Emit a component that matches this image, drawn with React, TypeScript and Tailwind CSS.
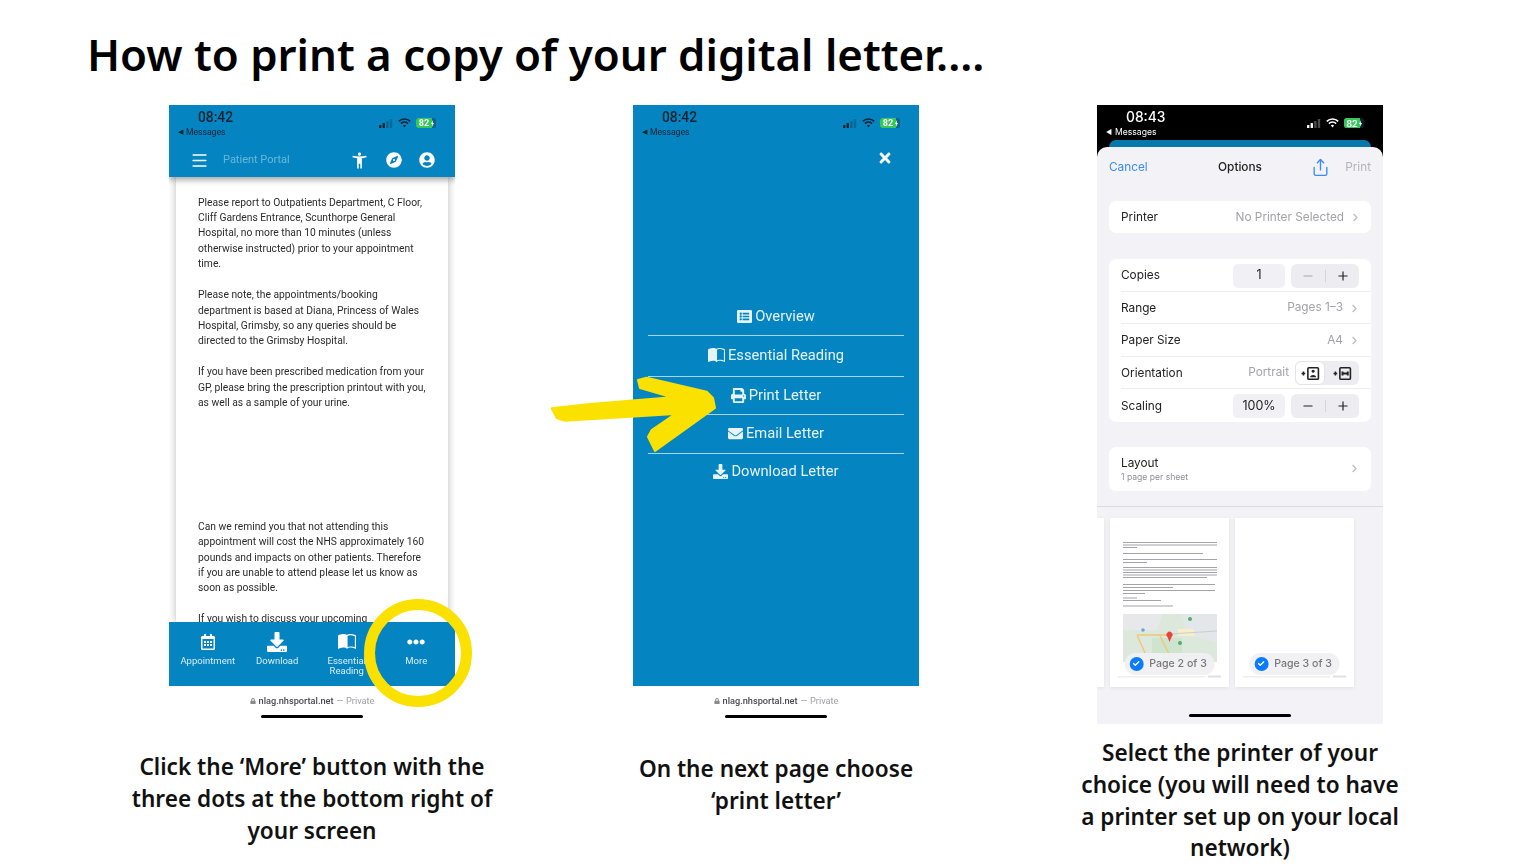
import type { ReactNode } from 'react'
import { BsBookHalf } from 'react-icons/bs'
import {
  FaCheck,
  FaChevronRight,
  FaCompass,
  FaDownload,
  FaEllipsisH,
  FaEnvelope,
  FaListAlt,
  FaLock,
  FaPrint,
  FaRegCalendarAlt,
  FaTimes,
  FaUserCircle,
} from 'react-icons/fa'
import { MdAccessibilityNew } from 'react-icons/md'
import { Menu, Minus, Plus, Share } from 'lucide-react'

const letter = [
  'Please report to Outpatients Department, C Floor,',
  'Cliff Gardens Entrance, Scunthorpe General',
  'Hospital, no more than 10 minutes (unless',
  'otherwise instructed) prior to your appointment',
  'time.',
  '',
  'Please note, the appointments/booking',
  'department is based at Diana, Princess of Wales',
  'Hospital, Grimsby, so any queries should be',
  'directed to the Grimsby Hospital.',
  '',
  'If you have been prescribed medication from your',
  'GP, please bring the prescription printout with you,',
  'as well as a sample of your urine.',
  '',
  '',
  '',
  '',
  '',
  '',
  '',
  'Can we remind you that not attending this',
  'appointment will cost the NHS approximately 160',
  'pounds and impacts on other patients. Therefore',
  'if you are unable to attend please let us know as',
  'soon as possible.',
  '',
  'If you wish to discuss your upcoming',
]

// tiny lines of the letter as they look in the print preview: [y, width]
const previewLines = [
  [24, 94], [26.5, 94], [29, 14], [35, 80], [41, 94], [44, 24], [49, 94], [51.5, 94], [54, 94], [56.5, 94],
  [59, 84], [66, 92], [69, 50], [72, 92], [75, 22], [79.5, 14], [82, 38], [87.5, 50],
]

function StatusBar({ time, light }: { time: string; light?: boolean }) {
  const ink = light ? 'text-white' : 'text-[#10222e]'
  const fill = light ? '#ffffff' : '#10222e'
  return (
    <div className={`relative h-[42px] shrink-0 ${ink}`}>
      <div className="pl-[29px] pt-[5px] text-[13.8px] font-medium leading-[15px]">{time}</div>
      <div className="flex items-center gap-[3px] pl-[9px] pt-[2px] text-[8.6px] leading-[11px]">
        <span className="text-[6.5px]">◀</span>
        <span>Messages</span>
      </div>
      <div className="absolute right-[19px] top-[13px] flex items-center gap-[5px]">
        <svg width="14" height="9" viewBox="0 0 14 9">
          <rect x="0" y="6" width="2.4" height="3" rx="0.6" fill={fill} />
          <rect x="3.6" y="4" width="2.4" height="5" rx="0.6" fill={fill} />
          <rect x="7.2" y="2" width="2.4" height="7" rx="0.6" fill={fill} opacity="0.3" />
          <rect x="10.8" y="0" width="2.4" height="9" rx="0.6" fill={fill} opacity="0.3" />
        </svg>
        <svg width="13" height="10" viewBox="0 0 13 10" fill="none" stroke={fill} strokeWidth="1.6">
          <path d="M0.8 3.4a8 8 0 0 1 11.4 0" />
          <path d="M2.9 5.6a5 5 0 0 1 7.2 0" />
          <path d="M6.5 9.4 4.9 7.6a2.3 2.3 0 0 1 3.2 0Z" fill={fill} stroke="none" />
        </svg>
        <div className="flex h-[10px] w-[20px] items-center overflow-hidden rounded-[2.5px] bg-[#1a3f4f]/50 text-[9px] font-bold leading-none text-white">
          <span className="flex h-full w-[16px] items-center justify-center bg-[#34c759]">82</span>
          <svg width="3" height="7" viewBox="0 0 3 7" className="-ml-[1px]">
            <path d="M2 0 0 4h1.2L1 7l2-4H1.8Z" fill="#ffffff" />
          </svg>
        </div>
      </div>
    </div>
  )
}

function SafariBar() {
  return (
    <div className="flex h-[38px] shrink-0 flex-col items-center bg-white pt-[9px]">
      <div className="flex items-center gap-[3px] text-[9.2px] leading-[11px] text-[#4a4a4e]">
        <FaLock className="size-[6px] text-[#8a8a8e]" />
        <span className="font-medium">nlag.nhsportal.net</span>
        <span className="text-[#a0a0a4]">— Private</span>
      </div>
      <div className="mt-[8.5px] h-[3px] w-[102px] rounded-full bg-black" />
    </div>
  )
}

function NavItem({ icon, children }: { icon: ReactNode; children: ReactNode }) {
  return (
    <div className="flex w-[69.5px] flex-col items-center pt-[9px] text-center text-[9.5px] leading-[10px] text-white/85">
      <div className="flex h-[22px] items-center text-white">{icon}</div>
      <div className="mt-[3px]">{children}</div>
    </div>
  )
}

function PortalScreen() {
  return (
    <div className="flex h-[619px] w-[286px] flex-col overflow-hidden bg-white font-['Roboto',sans-serif] blur-[0.3px]">
      <div className="z-10 shrink-0 bg-[#0485c2] shadow-[0_3px_6px_rgba(0,0,0,0.35)]">
        <StatusBar time="08:42" />
        <div className="-mt-[2px] flex h-[32px] items-center pb-[2px] pl-[21px] pr-[20px] text-white">
          <Menu className="size-[19px]" strokeWidth={2} />
          <span className="ml-[14px] text-[11px] text-white/40">Patient Portal</span>
          <div className="ml-auto flex items-center gap-[17px]">
            <MdAccessibilityNew className="size-[19px]" />
            <FaCompass className="size-[16px]" />
            <FaUserCircle className="size-[16px]" />
          </div>
        </div>
      </div>
      <div className="flex-1 overflow-hidden px-[7px]">
        <div className="h-full bg-white pl-[22px] pt-[17.5px] text-[10.3px] leading-[15.45px] text-[#2b2b2b] shadow-[0_0_8px_rgba(0,0,0,0.28)]">
          {letter.map((line, i) => (
            <div key={i} className="h-[15.45px] whitespace-nowrap">
              {line}
            </div>
          ))}
        </div>
      </div>
      <div className="z-10 flex h-[64px] shrink-0 bg-[#0485c2] pl-[4px]">
        <NavItem icon={<FaRegCalendarAlt className="size-[16px]" />}>Appointment</NavItem>
        <NavItem icon={<FaDownload className="size-[20px]" />}>Download</NavItem>
        <NavItem icon={<BsBookHalf className="size-[18px]" />}>
          Essential
          <br />
          Reading
        </NavItem>
        <NavItem icon={<FaEllipsisH className="size-[18px]" />}>More</NavItem>
      </div>
      <SafariBar />
    </div>
  )
}

function MenuRow({ icon, label, height, last }: { icon: ReactNode; label: string; height: string; last?: boolean }) {
  return (
    <div
      className={`flex items-center justify-center gap-[3px] text-[14.7px] text-white/90 ${height} ${
        last ? '' : 'border-b border-[#a9d6ec]'
      }`}
    >
      {icon}
      <span>{label}</span>
    </div>
  )
}

function MenuScreen() {
  return (
    <div className="flex h-[619px] w-[286px] flex-col overflow-hidden bg-[#0485c2] font-['Roboto',sans-serif] blur-[0.3px]">
      <StatusBar time="08:42" />
      <div className="flex h-[150px] justify-end pr-[26px] pt-[3px] text-white">
        <FaTimes className="size-[16px]" />
      </div>
      <div className="flex-1 px-[15px]">
        <MenuRow icon={<FaListAlt className="size-[15px]" />} label="Overview" height="h-[39px] pt-[1px]" />
        <MenuRow icon={<BsBookHalf className="size-[17px]" />} label="Essential Reading" height="h-[41px] pb-[2px]" />
        <MenuRow icon={<FaPrint className="size-[15px]" />} label="Print Letter" height="h-[38px]" />
        <MenuRow icon={<FaEnvelope className="size-[15px]" />} label="Email Letter" height="h-[39px] pb-[2px]" />
        <MenuRow icon={<FaDownload className="size-[15px]" />} label="Download Letter" height="h-[37px] pb-[2px]" last />
      </div>
      <SafariBar />
    </div>
  )
}

function Chevron() {
  return <FaChevronRight className="ml-[7px] size-[9px] text-[#c0c0c5]" />
}

function OptionRow({ label, children, last }: { label: string; children?: ReactNode; last?: boolean }) {
  return (
    <div className={`flex h-[32.5px] items-center pr-[12px] pt-[2px] ${last ? '' : 'border-b border-[#ececef]'}`}>
      <span className="pt-[1px] text-[11.8px] text-[#222]">{label}</span>
      <div className="ml-auto flex items-center text-[11.8px] text-[#a3a3a8]">{children}</div>
    </div>
  )
}

function Stepper({ value, dim }: { value: string; dim?: boolean }) {
  return (
    <div className="flex items-center gap-[6px]">
      <div className="flex h-[24px] w-[52px] items-center justify-center rounded-[5px] bg-[#f0f0f5] text-[12.5px] text-[#222]">
        {value}
      </div>
      <div className="flex h-[24px] w-[68px] items-center rounded-[6px] bg-[#ececf1] text-[#222]">
        <div className="flex w-[34px] justify-center">
          <Minus className={`size-[14px] ${dim ? 'text-[#a8a8ad]' : ''}`} />
        </div>
        <div className="h-[12px] w-px bg-[#d5d5da]" />
        <div className="flex flex-1 justify-center">
          <Plus className="size-[14px]" />
        </div>
      </div>
    </div>
  )
}

function PageIcon({ wide }: { wide?: boolean }) {
  return (
    <svg width="19" height="15" viewBox="0 0 18 14" fill="none" stroke="#222" strokeWidth="1.5">
      <rect x="6.5" y="1.5" width="10" height="11" rx="1" />
      <path d="M0.5 7H4M2.3 5.2V8.8" />
      {wide ? (
        <path d="M9 5v4M9.5 7h5M14 5v4" strokeWidth="1.8" />
      ) : (
        <path d="M11.5 3.4a1.5 1.5 0 1 1-.01 0ZM8.6 10.6c.5-3 5.3-3 5.8 0Z" fill="#222" stroke="none" />
      )}
    </svg>
  )
}

function PagePreview({ filled }: { filled?: boolean }) {
  return (
    <svg viewBox="0 0 119 169" className="h-full w-full">
      {filled && (
        <g>
          {previewLines.map(([y, w]) => (
            <rect key={y} x="13" y={y} width={w} height="1" fill="#a4a4a8" />
          ))}
          <rect x="13" y="96" width="94" height="48" fill="#dde8dd" />
          <path d="M13 96h40l-6 16H13Z" fill="#e6e8ea" />
          <path d="M72 96h35v28l-26-6-6-8Z" fill="#e4e7e9" />
          <rect x="68" y="111" width="16" height="7" fill="#f7efc9" />
          <rect x="42" y="120" width="30" height="24" fill="#cfe4cf" />
          <path d="M27 117h30l5 4M50 118l12 24M27 117l8 18" fill="none" stroke="#efc873" strokeWidth="1.4" />
          <path d="M60 116 107 113" fill="none" stroke="#c9cdd1" strokeWidth="1.2" />
          <circle cx="33" cy="112" r="1.8" fill="#6aa6e8" />
          <circle cx="80" cy="101" r="2" fill="#4caf6a" />
          <circle cx="70" cy="125" r="2" fill="#4caf6a" />
          <path d="M57.5 119a3 3 0 1 1 4 0l-2 5Z" fill="#e8443a" />
        </g>
      )}
      <rect x="8" y="158.5" width="87" height="0.8" fill="#e0e0e3" />
      <rect x="98" y="157.5" width="13" height="2" fill="#e0e0e3" />
    </svg>
  )
}

function PageBadge({ label }: { label: string }) {
  return (
    <div className="absolute bottom-[12px] left-1/2 flex h-[22px] -translate-x-1/2 items-center gap-[6px] whitespace-nowrap rounded-full bg-[#f0f0f3]/95 pl-[5px] pr-[8px] text-[10.6px] font-medium text-[#77777c]">
      <span className="flex size-[14px] items-center justify-center rounded-full bg-[#0a7aff] text-white">
        <FaCheck className="size-[7px]" />
      </span>
      {label}
    </div>
  )
}

function PrintScreen() {
  return (
    <div className="flex h-[619px] w-[286px] flex-col overflow-hidden bg-black font-['Inter',sans-serif] blur-[0.3px]">
      <div className="relative h-[42px] shrink-0">
        <StatusBar time="08:43" light />
        <div className="absolute inset-x-[12px] -bottom-[1px] h-[8px] rounded-t-[7px] bg-[#0678ab]" />
      </div>
      <div className="z-10 flex-1 rounded-t-[10px] bg-[#f2f2f7]">
        <div className="flex h-[40px] items-center px-[12px] pt-[1px] text-[11.8px]">
          <span className="w-[80px] text-[#3a8cf5]">Cancel</span>
          <span className="flex-1 text-center font-medium text-[#222]">Options</span>
          <div className="flex w-[80px] items-center justify-end gap-[15px]">
            <Share className="size-[19px] text-[#3a8cf5]" strokeWidth={1.7} />
            <span className="text-[#b4b4b9]">Print</span>
          </div>
        </div>
        <div className="px-[12px]">
          <div className="mt-[14px] flex h-[32px] items-center rounded-[7px] bg-white pl-[12px] pr-[11px] text-[11.8px]">
            <span className="pt-[1px] text-[#222]">Printer</span>
            <span className="ml-auto pt-[1px] text-[#a3a3a8]">No Printer Selected</span>
            <Chevron />
          </div>
          <div className="mt-[26px] rounded-[7px] bg-white pl-[12px]">
            <OptionRow label="Copies">
              <Stepper value="1" dim />
            </OptionRow>
            <OptionRow label="Range">
              Pages 1–3
              <Chevron />
            </OptionRow>
            <OptionRow label="Paper Size">
              A4
              <Chevron />
            </OptionRow>
            <OptionRow label="Orientation">
              <span className="mr-[6px]">Portrait</span>
              <div className="flex h-[24px] w-[64px] items-center rounded-[6px] bg-[#ececf1]">
                <div className="flex h-full w-[30px] items-center justify-center rounded-[6px] border border-[#e4e4e8] bg-white">
                  <PageIcon />
                </div>
                <div className="flex flex-1 justify-center">
                  <PageIcon wide />
                </div>
              </div>
            </OptionRow>
            <OptionRow label="Scaling" last>
              <Stepper value="100%" />
            </OptionRow>
          </div>
          <div className="mt-[25px] flex h-[44px] items-center rounded-[7px] bg-white px-[12px]">
            <div className="pt-[1px]">
              <div className="text-[11.8px] leading-[16px] text-[#222]">Layout</div>
              <div className="mt-[1px] text-[8.6px] leading-[11px] text-[#8f8f94]">1 page per sheet</div>
            </div>
            <FaChevronRight className="ml-auto size-[9px] text-[#c0c0c5]" />
          </div>
        </div>
        <div className="mt-[15px] flex h-[181px] gap-[6px] border-t border-[#dcdce0] pt-[11px]">
          <div className="h-[169px] w-[7px] shrink-0 bg-white shadow-[0_1px_4px_rgba(0,0,0,0.08)]" />
          <div className="relative h-[169px] w-[119px] shrink-0 bg-white shadow-[0_1px_4px_rgba(0,0,0,0.08)]">
            <PagePreview filled />
            <PageBadge label="Page 2 of 3" />
          </div>
          <div className="relative h-[169px] w-[119px] shrink-0 bg-white shadow-[0_1px_4px_rgba(0,0,0,0.08)]">
            <PagePreview />
            <PageBadge label="Page 3 of 3" />
          </div>
        </div>
        <div className="mx-auto mt-[27.5px] h-[3px] w-[102px] rounded-full bg-black" />
      </div>
    </div>
  )
}

function Step({ screen, offset, children }: { screen: ReactNode; offset: string; children: ReactNode }) {
  return (
    <div className="w-[286px] shrink-0">
      {screen}
      <p className={`-mx-[60px] text-center text-[22.6px] font-semibold leading-[31.8px] text-[#111] ${offset}`}>{children}</p>
    </div>
  )
}

export default function App() {
  return (
    <div className="relative h-[864px] w-[1536px] overflow-hidden bg-white font-['Noto_Sans',sans-serif]">
      <h1 className="flex h-[105px] items-start pl-[87px] pt-[24px] text-[43.8px] font-semibold leading-[60px] text-black">
        How to print a copy of your digital letter....
      </h1>
      <div className="flex gap-[178px] pl-[169px]">
        <Step screen={<PortalScreen />} offset="mt-[27px]">
          Click the ‘More’ button with the
          <br />
          three dots at the bottom right of
          <br />
          your screen
        </Step>
        <Step screen={<MenuScreen />} offset="mt-[29px]">
          On the next page choose
          <br />
          ‘print letter’
        </Step>
        <Step screen={<PrintScreen />} offset="mt-[13px]">
          Select the printer of your
          <br />
          choice (you will need to have
          <br />a printer set up on your local
          <br />
          network)
        </Step>
      </div>
      {/* yellow annotations drawn over the screenshots */}
      <svg className="pointer-events-none absolute left-0 top-0 z-20" width="1536" height="864" viewBox="0 0 1536 864">
        <circle cx="418" cy="653" r="48.5" fill="none" stroke="#fbe100" strokeWidth="11" />
        <path
          d="M551.7 408.3 590 404 671.7 397.3 640 388 638 380 646.7 377.7 706.7 391.7 713 398 715 408 655 451 648 436.7 651.7 430 675 414 565 420.7 556.7 418Z"
          fill="#fbe100"
          stroke="#fbe100"
          strokeWidth="2"
          strokeLinejoin="round"
        />
      </svg>
    </div>
  )
}
